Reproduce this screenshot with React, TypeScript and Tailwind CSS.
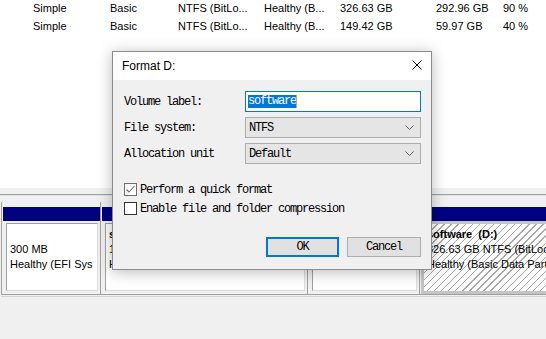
const rows = [
  ['Simple', 'Basic', 'NTFS (BitLo...', 'Healthy (B...', '326.63 GB', '292.96 GB', '90 %'],
  ['Simple', 'Basic', 'NTFS (BitLo...', 'Healthy (B...', '149.42 GB', '59.97 GB', '40 %'],
];

const mono = "font-['Liberation_Mono',monospace] text-[12px] tracking-[-1.2px]";

function Chevron() {
  return (
    <svg width="9" height="5" viewBox="0 0 9 5" className="mr-[6px]">
      <path d="M0.5 0.5 L4.5 4.5 L8.5 0.5" fill="none" stroke="#606060" strokeWidth="1" />
    </svg>
  );
}

function Checkbox({ checked }: { checked?: boolean }) {
  return (
    <div
      className={`w-[13px] h-[13px] bg-white border ${checked ? 'border-[#6d6d6d]' : 'border-[#333333]'} flex items-center justify-center`}
    >
      {checked && (
        <svg width="11" height="11" viewBox="0 0 11 11">
          <path d="M1.5 5.5 L4 8 L9.5 2" fill="none" stroke="#6d6d6d" strokeWidth="1.1" />
        </svg>
      )}
    </div>
  );
}

export default function App() {
  return (
    <div className="relative w-[546px] h-[339px] overflow-hidden bg-[#f0f0f0] text-[11px] text-black font-['Liberation_Sans',Arial,sans-serif]">
      {/* Volume list */}
      <div className="h-[189px] bg-white">
        <div className="-mt-px">
          {rows.map((r, i) => (
            <div
              key={i}
              className="grid grid-cols-[77px_68px_86px_76px_96px_67px_1fr] pl-[33px] h-[18px] items-center whitespace-nowrap"
            >
              {r.map((c, j) => (
                <span key={j}>{c}</span>
              ))}
            </div>
          ))}
        </div>
      </div>

      {/* Splitter */}
      <div className="h-[6px]" />
      <div className="h-px bg-[#a0a0a0]" />
      <div className="h-px bg-[#e3e3e3]" />
      <div className="h-[6px]" />

      {/* Disk graphical view */}
      <div className="ml-px flex h-[93px] border-l border-b border-[#a0a0a0]">
        <div className="w-[99px] shrink-0 flex flex-col pt-[5px] pl-px border-r border-[#a0a0a0]">
          <div className="h-[14px] bg-[#000080]" />
          <div className="mt-[2px] ml-[3px] mr-[2px] h-[68px] bg-white border border-t-[#a0a0a0] border-l-[#a0a0a0] border-r-[#dcdcdc] border-b-[#dcdcdc] pl-[3px] pt-[3px] leading-[15px] whitespace-nowrap overflow-hidden">
            <div>&nbsp;</div>
            <div>300 MB</div>
            <div>Healthy (EFI Sys</div>
          </div>
        </div>
        <div className="w-[207px] shrink-0 flex flex-col pt-[5px] pl-px border-r border-[#a0a0a0]">
          <div className="h-[14px] bg-[#000080]" />
          <div className="mt-[2px] ml-[3px] mr-[2px] h-[68px] bg-white border border-t-[#a0a0a0] border-l-[#a0a0a0] border-r-[#dcdcdc] border-b-[#dcdcdc] pl-[3px] pt-[3px] leading-[15px] whitespace-nowrap overflow-hidden">
            <div className="font-bold">system (C:)</div>
            <div>149.42 GB NTFS (BitLocker Encrypted)</div>
            <div>Healthy (Boot, Page File, Crash Dump, Basic Data Partition)</div>
          </div>
        </div>
        <div className="w-[112px] shrink-0 flex flex-col pt-[5px] pl-px border-r border-[#a0a0a0]">
          <div className="h-[14px] bg-[#000080]" />
          <div className="mt-[2px] ml-[3px] mr-[2px] h-[68px] bg-white border border-t-[#a0a0a0] border-l-[#a0a0a0] border-r-[#dcdcdc] border-b-[#dcdcdc] pl-[3px] pt-[3px] leading-[15px] whitespace-nowrap overflow-hidden">
            <div>&nbsp;</div>
            <div>529 MB</div>
            <div>Healthy (Recovery Partition)</div>
          </div>
        </div>
        <div className="flex-1 min-w-0 flex flex-col pt-[5px] pl-px">
          <div className="h-[14px] bg-[#000080]" />
          <div className="h-[73px] border-[3px] border-r-0 border-[#c4c4c4] bg-[repeating-linear-gradient(135deg,#ffffff_0px,#ffffff_4px,#a8a8a8_4px,#a8a8a8_5px)] pl-[3px] pt-[3px] leading-[15px] whitespace-nowrap overflow-hidden">
            <div className="font-bold">software&nbsp; (D:)</div>
            <div>326.63 GB NTFS (BitLocker Encrypted)</div>
            <div>Healthy (Basic Data Partition)</div>
          </div>
        </div>
      </div>
      <div className="mt-px ml-px h-px bg-[#d4d4d4]" />

      {/* Format dialog */}
      <div className="absolute left-[112px] top-[51px] w-[320px] h-[219px] flex flex-col border border-[#8c8c8c] bg-[#f0f0f0] shadow-[0_2px_14px_rgba(0,0,0,0.28)]">
        <div className="h-[28px] shrink-0 bg-white flex items-center justify-between pl-[9px] pr-[9px]">
          <span className="text-[12px]">Format D:</span>
          <svg width="10" height="10" viewBox="0 0 10 10" className="mb-[2px]">
            <path d="M0.5 0.5 L9.5 9.5 M9.5 0.5 L0.5 9.5" stroke="#000" strokeWidth="1" />
          </svg>
        </div>
        <div className={`flex-1 pt-[11px] pl-[11px] ${mono}`}>
          <div className="flex flex-col gap-[5px]">
            <div className="flex items-center h-[21px]">
              <span className="w-[121px]">Volume label:</span>
              <div className="w-[176px] h-[21px] border border-[#0078d7] bg-white flex items-center pl-[2px]">
                <span className="bg-[#0078d7] text-white leading-[13px]">software</span>
                <span className="w-px h-[13px] bg-[#f59a3c]" />
              </div>
            </div>
            <div className="flex items-center h-[21px]">
              <span className="w-[121px]">File system:</span>
              <div className="w-[176px] h-[21px] border border-[#adadad] bg-[#e5e5e5] flex items-center justify-between pl-[3px]">
                <span>NTFS</span>
                <Chevron />
              </div>
            </div>
            <div className="flex items-center h-[21px]">
              <span className="w-[121px]">Allocation unit</span>
              <div className="w-[176px] h-[21px] border border-[#adadad] bg-[#e5e5e5] flex items-center justify-between pl-[3px]">
                <span>Default</span>
                <Chevron />
              </div>
            </div>
          </div>

          <div className="mt-[16px]">
            <div className="flex items-center h-[19px] gap-[3px]">
              <Checkbox checked />
              <span>Perform a quick format</span>
            </div>
            <div className="flex items-center h-[19px] gap-[3px]">
              <Checkbox />
              <span>Enable file and folder compression</span>
            </div>
          </div>

          <div className="mt-[19px] flex justify-end gap-[8px] pr-[10px]">
            <div className="w-[73px] h-[20px] border-2 border-[#0078d7] bg-[#e1e1e1] flex items-center justify-center">OK</div>
            <div className="w-[74px] h-[20px] border border-[#adadad] bg-[#e1e1e1] flex items-center justify-center">Cancel</div>
          </div>
        </div>
      </div>
    </div>
  );
}
